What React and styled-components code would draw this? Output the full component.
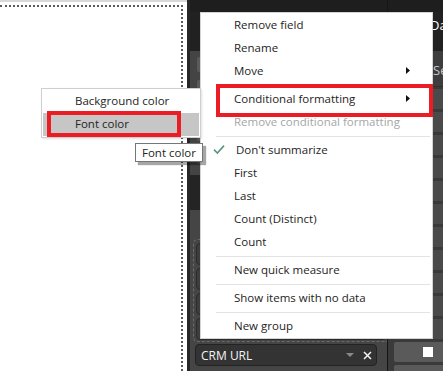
import React from "react";
import styled, { createGlobalStyle } from "styled-components";

const Global = createGlobalStyle`
  html, body { margin: 0; padding: 0; background: #fff; overflow: hidden; }
  body { font-family: "Open Sans", "Noto Sans", sans-serif; }
`;

const Stage = styled.div`
  position: relative;
  width: 443px;
  height: 371px;
  display: flex;
  overflow: hidden;
`;

/* ---------- report canvas ---------- */
const Canvas = styled.div`
  width: 187px;
  flex: none;
  box-sizing: border-box;
  background: #fff;
  border-top: 2px solid #d9d9d9;
  padding: 3px 4px 0 0;
`;

const ReportFrame = styled.div`
  height: 100%;
  box-sizing: border-box;
  border-top: 2px dotted #5a5a5a;
  border-right: 2px dotted #5a5a5a;
`;

/* ---------- visualizations pane ---------- */
const VizPane = styled.div`
  width: 200px;
  flex: none;
  box-sizing: border-box;
  display: flex;
  flex-direction: column;
  background: #454545;
  border-left: 3px solid #262626;
`;

const TopStrip = styled.div`
  height: 12px;
  flex: none;
  background: #1e1e1e;
`;

const PaneHeader = styled.div`
  height: 39px;
  flex: none;
  background: #212121;
`;

const Gallery = styled.div`
  height: 124px;
  flex: none;
  box-sizing: border-box;
  padding: 6px 0 0 7px;
  display: grid;
  grid-template-columns: repeat(8, 16px);
  grid-auto-rows: 15px;
  gap: 8px 6px;
  background: #444;
`;

const Tile = styled.div`
  background: #5a5a5a;
  border-radius: 2px;
`;

const Band = styled.div`
  height: 35px;
  flex: none;
  background: #242424;
`;

const Wells = styled.div`
  flex: 1;
  display: flex;
  flex-direction: column;
  padding: 29px 0 0 3px;
`;

const DashedWell = styled.div`
  display: flex;
  flex-direction: column;
  gap: 3px;
  padding: 3px 0 1px 2px;
  border: 1px dashed #6a6a6a;
  border-right: none;
  border-radius: 5px 0 0 5px;
`;

const Slot = styled.div`
  height: 22px;
  box-sizing: border-box;
  background: #3d3d3d;
  border: 1px solid #2b2b2b;
  border-radius: 4px;
`;

const Chip = styled.div`
  height: 22px;
  box-sizing: border-box;
  margin: 2px 10px 0 2px;
  padding: 0 4px 0 5px;
  display: flex;
  align-items: center;
  background: #333;
  border: 1px solid #232323;
  border-radius: 4px;
  color: #f4f4f4;
  font-size: 12px;
`;

const ChipLabel = styled.span`
  flex: 1;
`;

const ChipCaret = styled.span`
  width: 0;
  height: 0;
  margin-right: 9px;
  border-left: 4px solid transparent;
  border-right: 4px solid transparent;
  border-top: 4px solid #8a8a8a;
`;

/* ---------- fields pane ---------- */
const FieldsPane = styled.div`
  flex: 1;
  display: flex;
  flex-direction: column;
  background: #3f3f3f;
  border-left: 1px solid #161616;
`;

const FieldsTop = styled.div`
  height: 12px;
  flex: none;
  background: #1e1e1e;
`;

const FieldsHeader = styled.div`
  height: 39px;
  flex: none;
  box-sizing: border-box;
  padding: 4px 0 0 42px;
  background: #212121;
  color: #fff;
  font-size: 13px;
  line-height: 18px;
  white-space: nowrap;
`;

const SearchRow = styled.div`
  height: 36px;
  flex: none;
  box-sizing: border-box;
  padding: 10px 0 0 45px;
  background: #3d3d3d;
  color: #c8c8c8;
  font-size: 13px;
  line-height: 18px;
  white-space: nowrap;
  border-bottom: 1px solid #2e2e2e;
`;

const FieldList = styled.div`
  flex: 1;
  display: flex;
  flex-direction: column;
  gap: 3px;
  padding: 2px 0 0 6px;
  background: #3a3a3a;
`;

const FieldRow = styled.div`
  height: 20px;
  flex: none;
  display: flex;
  align-items: center;
  padding-left: ${(p) => p.$indent}px;
  background: ${(p) => (p.$bright ? "#5a5a5a" : "#4a4a4a")};
  border-radius: 2px;
`;

const CheckBox = styled.div`
  width: ${(p) => (p.$yellow ? 12 : 10)}px;
  height: ${(p) => (p.$yellow ? 12 : 10)}px;
  margin-top: ${(p) => (p.$yellow ? 6 : 0)}px;
  background: ${(p) => (p.$yellow ? "#f2c811" : p.$white ? "#ffffff" : "#cfcfcf")};
`;

/* ---------- context menus (overlays) ---------- */
const Menu = styled.div`
  position: absolute;
  left: 200px;
  top: 12px;
  width: 233px;
  box-sizing: border-box;
  padding: 1px 0 0;
  background: #fff;
  border: 1px solid #d4d4d4;
  font-size: 11.5px;
  color: #252423;
`;

const Item = styled.div`
  position: relative;
  height: 23px;
  box-sizing: border-box;
  display: flex;
  align-items: center;
  padding-left: ${(p) => p.$pad}px;
  padding-bottom: 2px;
  color: ${(p) => (p.$disabled ? "#a6a6a6" : "#252423")};
  background: ${(p) => (p.$hover ? "#c6c6c6" : "transparent")};
  white-space: nowrap;
`;

const Separator = styled.div`
  height: 5px;
  display: flex;
  align-items: center;
  &::after {
    content: "";
    flex: 1;
    height: 1px;
    margin: 0 2px 0 15px;
    background: ${(p) => (p.$hidden ? "transparent" : "#e3e3e3")};
  }
`;

const CheckMark = styled.svg`
  position: absolute;
  left: 12px;
  top: 5px;
`;

const Arrow = styled.svg`
  position: absolute;
  right: 22px;
  top: 7px;
`;

const Annotation = styled.div`
  position: absolute;
  top: ${(p) => p.$top}px;
  bottom: ${(p) => p.$bottom}px;
  left: ${(p) => p.$left}px;
  right: ${(p) => p.$right}px;
  border: 4px solid #ec1c24;
  pointer-events: none;
`;

const SubMenu = styled.div`
  position: absolute;
  left: 41px;
  top: 88px;
  width: 160px;
  box-sizing: border-box;
  padding: 1px;
  background: #fff;
  border: 1px solid #cfcfcf;
  box-shadow: 1px 1px 2px rgba(0, 0, 0, 0.12);
  font-size: 11.5px;
`;

const Tooltip = styled.div`
  position: absolute;
  left: 135px;
  top: 143px;
  height: 19px;
  box-sizing: border-box;
  padding: 0 6px;
  background: #fff;
  border: 1px solid #767676;
  box-shadow: 3px 3px 1px rgba(0, 0, 0, 0.35);
  color: #252423;
  font-size: 11.5px;
  line-height: 17px;
  white-space: nowrap;
`;

const Check = () => (
  <CheckMark width="12" height="11" viewBox="0 0 12 11">
    <path d="M1 5.6 L4.4 9 L11 1.6" fill="none" stroke="#5f9483" strokeWidth="1.6" />
  </CheckMark>
);

const SubArrow = () => (
  <Arrow width="4" height="7" viewBox="0 0 4 7">
    <polygon points="0,0 4,3.5 0,7" fill="#111" />
  </Arrow>
);

const CloseX = () => (
  <svg width="9" height="9" viewBox="0 0 9 9">
    <path d="M1 1 L8 8 M8 1 L1 8" stroke="#f2f2f2" strokeWidth="1.5" />
  </svg>
);

const fieldRows = [
  { indent: 44 }, { indent: 44 }, { indent: 44 }, { indent: 44 },
  { indent: 44 }, { indent: 50, cb: true }, { indent: 50, cb: true },
  { indent: 44 }, { indent: 50, cb: true }, { indent: 50, cb: true },
  { indent: 44 }, { indent: 29, cb: "white", bright: true },
  { indent: 28, cb: "yellow", bright: true },
];

export default function App() {
  return (
    <>
      <Global />
      <Stage>
        <Canvas>
          <ReportFrame />
        </Canvas>

        <VizPane>
          <TopStrip />
          <PaneHeader />
          <Gallery>
            {Array.from({ length: 40 }).map((_, i) => (
              <Tile key={i} />
            ))}
          </Gallery>
          <Band />
          <Wells>
            <DashedWell>
              <Slot />
              <Slot />
              <Slot />
              <Slot />
            </DashedWell>
            <Chip>
              <ChipLabel>CRM URL</ChipLabel>
              <ChipCaret />
              <CloseX />
            </Chip>
          </Wells>
        </VizPane>

        <FieldsPane>
          <FieldsTop />
          <FieldsHeader>Data</FieldsHeader>
          <SearchRow>Search</SearchRow>
          <FieldList>
            {fieldRows.map((r, i) => (
              <FieldRow key={i} $indent={r.indent} $bright={r.bright}>
                {r.cb && <CheckBox $white={r.cb === "white"} $yellow={r.cb === "yellow"} />}
              </FieldRow>
            ))}
          </FieldList>
        </FieldsPane>

        <Menu>
          <Item $pad={33}>Remove field</Item>
          <Item $pad={33}>Rename</Item>
          <Item $pad={33}>
            Move
            <SubArrow />
          </Item>
          <Separator $hidden />
          <Item $pad={33}>
            Conditional formatting
            <SubArrow />
            <Annotation $top={-4} $bottom={-6} $left={15} $right={-1} />
          </Item>
          <Item $pad={33} $disabled>
            Remove conditional formatting
          </Item>
          <Separator />
          <Item $pad={35}>
            <Check />
            Don't summarize
          </Item>
          <Item $pad={33}>First</Item>
          <Item $pad={33}>Last</Item>
          <Item $pad={33}>Count (Distinct)</Item>
          <Item $pad={33}>Count</Item>
          <Separator />
          <Item $pad={33}>New quick measure</Item>
          <Separator />
          <Item $pad={33}>Show items with no data</Item>
          <Separator />
          <Item $pad={33}>New group</Item>
        </Menu>

        <SubMenu>
          <Item $pad={32}>Background color</Item>
          <Item $pad={32} $hover>
            Font color
            <Annotation $top={-2} $bottom={-1} $left={4} $right={18} />
          </Item>
        </SubMenu>

        <Tooltip>Font color</Tooltip>
      </Stage>
    </>
  );
}
